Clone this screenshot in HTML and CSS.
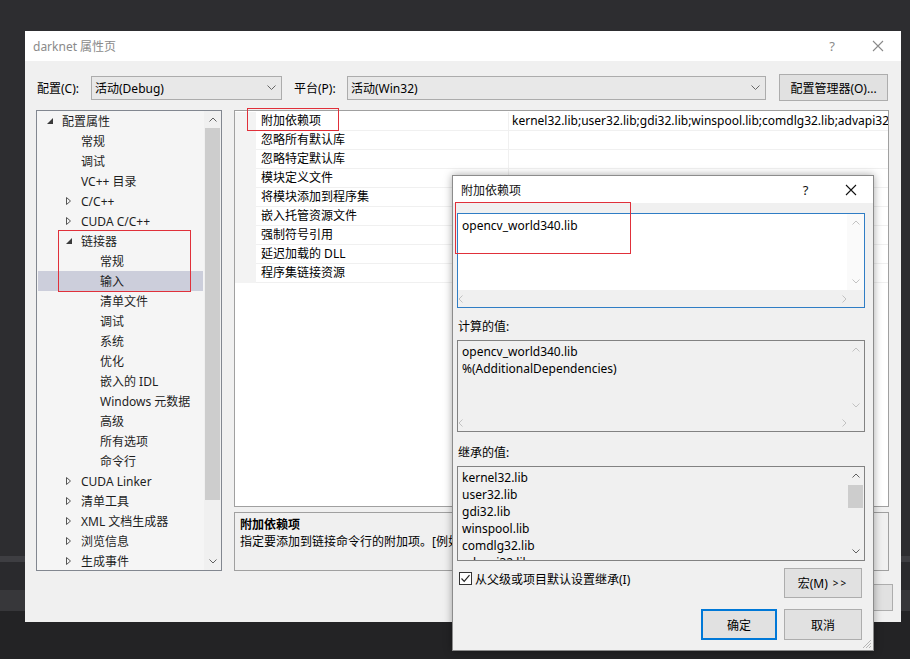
FILE: index.html
```html
<!DOCTYPE html>
<html lang="zh-CN">

<head>
    <meta charset="UTF-8">
    <title>darknet 属性页</title>
    <link rel="stylesheet" href="styles.css">
</head>

<body>
    <!-- 主窗口 -->
    <div class="win">
        <div class="titlebar">
            <span class="title">darknet 属性页</span>
            <span class="cap-btn">?</span>
            <span class="cap-btn">
                <svg width="12" height="12" viewBox="0 0 12 12"><path d="M1 1L11 11M11 1L1 11" stroke="#8a8a8a" stroke-width="1.1" fill="none"/></svg>
            </span>
        </div>

        <div class="toolbar">
            <span class="lbl lbl-cfg">配置(C):</span>
            <div class="combo combo-cfg">
                <span>活动(Debug)</span>
                <svg width="9" height="5" viewBox="0 0 9 5"><path d="M0.5 0.5L4.5 4.5L8.5 0.5" stroke="#666" fill="none"/></svg>
            </div>
            <span class="lbl lbl-plat">平台(P):</span>
            <div class="combo combo-plat">
                <span>活动(Win32)</span>
                <svg width="9" height="5" viewBox="0 0 9 5"><path d="M0.5 0.5L4.5 4.5L8.5 0.5" stroke="#666" fill="none"/></svg>
            </div>
            <div class="btn btn-mgr">配置管理器(O)...</div>
        </div>

        <div class="content">
            <div class="tree">
                <ul class="tree-list">
                    <li class="lv0"><span class="arr"><svg width="6" height="6" viewBox="0 0 6 6"><polygon points="6,0 6,6 0,6" fill="#3a3a3a"/></svg></span>配置属性</li>
                    <li class="lv1"><span class="arr"></span>常规</li>
                    <li class="lv1"><span class="arr"></span>调试</li>
                    <li class="lv1"><span class="arr"></span>VC++ 目录</li>
                    <li class="lv1"><span class="arr"><svg width="5" height="8" viewBox="0 0 5 8"><polygon points="0.5,0.5 4.5,4 0.5,7.5" fill="none" stroke="#555"/></svg></span>C/C++</li>
                    <li class="lv1"><span class="arr"><svg width="5" height="8" viewBox="0 0 5 8"><polygon points="0.5,0.5 4.5,4 0.5,7.5" fill="none" stroke="#555"/></svg></span>CUDA C/C++</li>
                    <li class="lv1"><span class="arr"><svg width="6" height="6" viewBox="0 0 6 6"><polygon points="6,0 6,6 0,6" fill="#3a3a3a"/></svg></span>链接器</li>
                    <li class="lv2"><span class="arr"></span>常规</li>
                    <li class="lv2 sel"><span class="arr"></span>输入</li>
                    <li class="lv2"><span class="arr"></span>清单文件</li>
                    <li class="lv2"><span class="arr"></span>调试</li>
                    <li class="lv2"><span class="arr"></span>系统</li>
                    <li class="lv2"><span class="arr"></span>优化</li>
                    <li class="lv2"><span class="arr"></span>嵌入的 IDL</li>
                    <li class="lv2"><span class="arr"></span>Windows 元数据</li>
                    <li class="lv2"><span class="arr"></span>高级</li>
                    <li class="lv2"><span class="arr"></span>所有选项</li>
                    <li class="lv2"><span class="arr"></span>命令行</li>
                    <li class="lv1"><span class="arr"><svg width="5" height="8" viewBox="0 0 5 8"><polygon points="0.5,0.5 4.5,4 0.5,7.5" fill="none" stroke="#555"/></svg></span>CUDA Linker</li>
                    <li class="lv1"><span class="arr"><svg width="5" height="8" viewBox="0 0 5 8"><polygon points="0.5,0.5 4.5,4 0.5,7.5" fill="none" stroke="#555"/></svg></span>清单工具</li>
                    <li class="lv1"><span class="arr"><svg width="5" height="8" viewBox="0 0 5 8"><polygon points="0.5,0.5 4.5,4 0.5,7.5" fill="none" stroke="#555"/></svg></span>XML 文档生成器</li>
                    <li class="lv1"><span class="arr"><svg width="5" height="8" viewBox="0 0 5 8"><polygon points="0.5,0.5 4.5,4 0.5,7.5" fill="none" stroke="#555"/></svg></span>浏览信息</li>
                    <li class="lv1"><span class="arr"><svg width="5" height="8" viewBox="0 0 5 8"><polygon points="0.5,0.5 4.5,4 0.5,7.5" fill="none" stroke="#555"/></svg></span>生成事件</li>
                </ul>
                <div class="vscroll">
                    <div class="sb-btn"><svg width="8" height="5" viewBox="0 0 8 5"><path d="M0.5 4.5L4 1L7.5 4.5" stroke="#606060" fill="none"/></svg></div>
                    <div class="sb-track"><div class="thumb thumb-tree"></div></div>
                    <div class="sb-btn"><svg width="8" height="5" viewBox="0 0 8 5"><path d="M0.5 0.5L4 4L7.5 0.5" stroke="#606060" fill="none"/></svg></div>
                </div>
            </div>

            <div class="main-col">
                <div class="grid">
                    <div class="pg-row"><span class="pg-gut"></span><span class="pg-name">附加依赖项</span><span class="pg-val">kernel32.lib;user32.lib;gdi32.lib;winspool.lib;comdlg32.lib;advapi32.lib;shell32.lib;ole32.lib;oleaut32.lib;uuid.lib;odbc32.lib;odbccp32.lib;%(AdditionalDependencies)</span></div>
                    <div class="pg-row"><span class="pg-gut"></span><span class="pg-name">忽略所有默认库</span><span class="pg-val"></span></div>
                    <div class="pg-row"><span class="pg-gut"></span><span class="pg-name">忽略特定默认库</span><span class="pg-val"></span></div>
                    <div class="pg-row"><span class="pg-gut"></span><span class="pg-name">模块定义文件</span><span class="pg-val"></span></div>
                    <div class="pg-row"><span class="pg-gut"></span><span class="pg-name">将模块添加到程序集</span><span class="pg-val"></span></div>
                    <div class="pg-row"><span class="pg-gut"></span><span class="pg-name">嵌入托管资源文件</span><span class="pg-val"></span></div>
                    <div class="pg-row"><span class="pg-gut"></span><span class="pg-name">强制符号引用</span><span class="pg-val"></span></div>
                    <div class="pg-row"><span class="pg-gut"></span><span class="pg-name">延迟加载的 DLL</span><span class="pg-val"></span></div>
                    <div class="pg-row"><span class="pg-gut"></span><span class="pg-name">程序集链接资源</span><span class="pg-val"></span></div>
                </div>
                <div class="desc">
                    <div class="desc-title">附加依赖项</div>
                    <div>指定要添加到链接命令行的附加项。[例如 kernel32.lib]</div>
                </div>
            </div>
        </div>

        <div class="footer">
            <div class="btn btn-foot">确定</div>
            <div class="btn btn-foot">取消</div>
            <div class="btn btn-foot">应用</div>
        </div>
    </div>

    <!-- 附加依赖项 对话框 -->
    <div class="dlg">
        <div class="dlg-title">
            <span class="title">附加依赖项</span>
            <span class="cap-btn dark">?</span>
            <span class="cap-btn">
                <svg width="12" height="12" viewBox="0 0 12 12"><path d="M1 1L11 11M11 1L1 11" stroke="#111" stroke-width="1.1" fill="none"/></svg>
            </span>
        </div>
        <div class="dlg-body">
            <div class="lb lb-edit">
                <div class="lb-text">opencv_world340.lib</div>
                <div class="lb-vs">
                    <div class="sb-btn"><svg width="8" height="5" viewBox="0 0 8 5"><path d="M0.5 4.5L4 1L7.5 4.5" stroke="#c2c2c2" fill="none"/></svg></div>
                    <div class="sb-btn"><svg width="8" height="5" viewBox="0 0 8 5"><path d="M0.5 0.5L4 4L7.5 0.5" stroke="#c2c2c2" fill="none"/></svg></div>
                </div>
                <div class="lb-hs">
                    <div class="sb-btn"><svg width="5" height="8" viewBox="0 0 5 8"><path d="M4.5 0.5L1 4L4.5 7.5" stroke="#c2c2c2" fill="none"/></svg></div>
                    <div class="sb-btn"><svg width="5" height="8" viewBox="0 0 5 8"><path d="M0.5 0.5L4 4L0.5 7.5" stroke="#c2c2c2" fill="none"/></svg></div>
                </div>
                <div class="lb-corner"></div>
            </div>

            <div class="cap">计算的值:</div>
            <div class="lb lb-calc">
                <div class="lb-text">opencv_world340.lib<br>%(AdditionalDependencies)</div>
                <div class="lb-vs">
                    <div class="sb-btn"><svg width="8" height="5" viewBox="0 0 8 5"><path d="M0.5 4.5L4 1L7.5 4.5" stroke="#c2c2c2" fill="none"/></svg></div>
                    <div class="sb-btn"><svg width="8" height="5" viewBox="0 0 8 5"><path d="M0.5 0.5L4 4L7.5 0.5" stroke="#c2c2c2" fill="none"/></svg></div>
                </div>
                <div class="lb-hs">
                    <div class="sb-btn"><svg width="5" height="8" viewBox="0 0 5 8"><path d="M4.5 0.5L1 4L4.5 7.5" stroke="#c2c2c2" fill="none"/></svg></div>
                    <div class="sb-btn"><svg width="5" height="8" viewBox="0 0 5 8"><path d="M0.5 0.5L4 4L0.5 7.5" stroke="#c2c2c2" fill="none"/></svg></div>
                </div>
                <div class="lb-corner"></div>
            </div>

            <div class="cap cap-inh">继承的值:</div>
            <div class="lb lb-inh">
                <div class="lb-text">kernel32.lib<br>user32.lib<br>gdi32.lib<br>winspool.lib<br>comdlg32.lib<br>advapi32.lib</div>
                <div class="vscroll">
                    <div class="sb-btn"><svg width="8" height="5" viewBox="0 0 8 5"><path d="M0.5 4.5L4 1L7.5 4.5" stroke="#606060" fill="none"/></svg></div>
                    <div class="sb-track"><div class="thumb thumb-inh"></div></div>
                    <div class="sb-btn"><svg width="8" height="5" viewBox="0 0 8 5"><path d="M0.5 0.5L4 4L7.5 0.5" stroke="#606060" fill="none"/></svg></div>
                </div>
            </div>

            <div class="opt-row">
                <label class="chk">
                    <span class="chk-box"><svg width="11" height="11" viewBox="0 0 11 11"><path d="M1.5 5.5L4.2 8.3L9.5 2.2" stroke="#222" stroke-width="1.2" fill="none"/></svg></span>
                    从父级或项目默认设置继承(I)
                </label>
                <div class="btn btn-macro">宏(M) <span class="gt">&gt;&gt;</span></div>
            </div>

            <div class="dlg-btns">
                <div class="btn btn-ok">确定</div>
                <div class="btn btn-cancel">取消</div>
            </div>
        </div>
        <svg class="grip" width="12" height="12" viewBox="0 0 12 12"><path d="M11 3L3 11M11 6L6 11M11 9L9 11" stroke="#b5b5b5" fill="none"/></svg>
    </div>

    <!-- 红框标注 -->
    <div class="mark mark-dep"></div>
    <div class="mark mark-tree"></div>
    <div class="mark mark-edit"></div>
</body>

</html>
```

FILE: styles.css
```css
* {
    margin: 0;
    padding: 0;
    box-sizing: border-box;
}

li {
    list-style: none;
}

body {
    width: 910px;
    height: 659px;
    overflow: hidden;
    position: relative;
    font-family: "Noto Sans", "Noto Sans CJK SC", sans-serif;
    font-size: 12px;
    color: #000;
    background: linear-gradient(to bottom, #2d2d30 0, #2d2d30 556px, #3e3e42 556px, #3e3e42 562px, #2a2a2d 562px, #2a2a2d 590px, #37373a 590px, #37373a 611px, #232325 611px);
}

/* ---------- 主窗口 ---------- */
.win {
    position: absolute;
    left: 25px;
    top: 31px;
    width: 876px;
    height: 591px;
    background: #f0f0f0;
    display: flex;
    flex-direction: column;
}

.titlebar {
    height: 30px;
    background: #fff;
    display: flex;
    align-items: center;
    padding-left: 8px;
}

.title {
    flex: 1;
    color: #8a8a8a;
}

.cap-btn {
    width: 46px;
    height: 100%;
    display: flex;
    align-items: center;
    justify-content: center;
    color: #8a8a8a;
    font-size: 13px;
}

.cap-btn.dark {
    color: #111;
}

.toolbar {
    display: flex;
    align-items: center;
    height: 27px;
    margin-top: 13px;
    padding-left: 12px;
}

.lbl-cfg {
    width: 54px;
}

.lbl-plat {
    width: 53px;
    margin-left: 12px;
}

.combo {
    height: 24px;
    border: 1px solid #acacac;
    background: #e8e8e8;
    display: flex;
    align-items: center;
    justify-content: space-between;
    padding: 0 5px 0 3px;
}

.combo-cfg {
    width: 191px;
}

.combo-plat {
    width: 419px;
}

.btn {
    background: #e1e1e1;
    border: 1px solid #adadad;
    display: flex;
    align-items: center;
    justify-content: center;
}

.btn-mgr {
    width: 109px;
    height: 27px;
    margin-left: 13px;
}

.content {
    display: flex;
    height: 461px;
    margin-top: 9px;
    padding-left: 11px;
}

/* 左侧树 */
.tree {
    width: 186px;
    border: 1px solid #828790;
    background: #f5f5f5;
    display: flex;
}

.tree-list {
    flex: 1;
    overflow: hidden;
    color: #1e1e1e;
}

.tree-list li {
    height: 20px;
    display: flex;
    align-items: center;
    white-space: nowrap;
}

.tree-list .lv0 {
    padding-left: 7px;
}

.tree-list .lv1 {
    padding-left: 26px;
}

.tree-list .lv2 {
    padding-left: 45px;
}

.tree-list .sel {
    background: #cccedb;
    margin: 0 1px;
    padding-left: 44px;
}

.arr {
    width: 18px;
    display: flex;
    align-items: center;
    padding-left: 3px;
}

.vscroll {
    width: 17px;
    background: #f0f0f0;
    display: flex;
    flex-direction: column;
}

.sb-btn {
    height: 17px;
    flex: none;
    display: flex;
    align-items: center;
    justify-content: center;
}

.sb-track {
    flex: 1;
}

.thumb {
    background: #cdcdcd;
    margin: 0 1px;
}

.thumb-tree {
    height: 372px;
}

/* 属性表格 */
.main-col {
    width: 655px;
    margin-left: 12px;
    display: flex;
    flex-direction: column;
}

.grid {
    height: 397px;
    border: 1px solid #a0a0a0;
    background: #fff;
    padding-top: 1px;
    overflow: hidden;
}

.pg-row {
    display: flex;
    height: 19px;
}

.pg-gut {
    width: 21px;
    background: #f3f3f3;
}

.pg-name {
    width: 253px;
    padding-left: 5px;
    line-height: 18px;
    border-bottom: 1px solid #f0f0f0;
    border-right: 1px solid #f0f0f0;
}

.pg-val {
    flex: 1;
    padding-left: 3px;
    line-height: 18px;
    white-space: nowrap;
    overflow: hidden;
    border-bottom: 1px solid #f0f0f0;
}

.desc {
    height: 59px;
    margin-top: 5px;
    border: 1px solid #a0a0a0;
    padding: 3px 5px;
    line-height: 17px;
    white-space: nowrap;
    overflow: hidden;
}

.desc-title {
    font-weight: bold;
}

.footer {
    display: flex;
    justify-content: flex-end;
    margin-top: 13px;
    padding-right: 8px;
    gap: 8px;
}

.btn-foot {
    width: 75px;
    height: 27px;
}

/* ---------- 对话框 ---------- */
.dlg {
    position: absolute;
    left: 452px;
    top: 175px;
    width: 422px;
    height: 476px;
    background: #f0f0f0;
    border: 1px solid #8c8c8c;
    box-shadow: 0 0 8px rgba(0, 0, 0, .35);
}

.dlg-title {
    height: 27px;
    background: #fff;
    display: flex;
    align-items: center;
    padding-left: 8px;
}

.dlg-title .title {
    color: #111;
}

.dlg-title .cap-btn {
    width: 45px;
}

.dlg-body {
    padding: 10px 8px 0 4px;
}

.lb {
    display: grid;
    grid-template-columns: 1fr 17px;
    grid-template-rows: 1fr 17px;
    border: 1px solid #828282;
    line-height: 17px;
}

.lb-text {
    padding: 2px 4px;
    overflow: hidden;
    white-space: nowrap;
}

.lb-vs {
    display: flex;
    flex-direction: column;
    justify-content: space-between;
}

.lb-hs {
    display: flex;
    justify-content: space-between;
    background: #f0f0f0;
}

.lb-corner {
    background: #f0f0f0;
}

.lb-edit {
    height: 95px;
    border-color: #2f7dc5;
    background: #fff;
}

.lb-edit .lb-text {
    padding-top: 3px;
}

.lb-edit .lb-vs {
    background: #fafafa;
}

.lb-calc {
    height: 92px;
    background: #f0f0f0;
}

.lb-inh {
    height: 95px;
    grid-template-rows: 1fr;
    background: #f0f0f0;
}

.thumb-inh {
    height: 23px;
    margin-top: 1px;
}

.cap {
    margin: 10px 0 5px 1px;
    line-height: 17px;
}

.cap-inh {
    margin-top: 12px;
}

.opt-row {
    display: flex;
    justify-content: space-between;
    margin-top: 7px;
}

.chk {
    display: flex;
    align-items: center;
    margin: 4px 0 0 2px;
    height: 13px;
}

.chk-box {
    width: 13px;
    height: 13px;
    border: 1px solid #333;
    background: #fff;
    display: flex;
    align-items: center;
    justify-content: center;
    margin-right: 3px;
}

.btn-macro {
    width: 78px;
    height: 30px;
    margin-right: 3px;
}

.gt {
    font-size: 10px;
    letter-spacing: 2px;
    margin-left: 5px;
}

.dlg-btns {
    display: flex;
    justify-content: flex-end;
    gap: 7px;
    margin: 11px 3px 0 0;
}

.btn-ok {
    width: 76px;
    height: 31px;
    border: 2px solid #0078d7;
}

.btn-cancel {
    width: 78px;
    height: 31px;
}

.grip {
    position: absolute;
    right: 1px;
    bottom: 1px;
}

/* ---------- 红框 ---------- */
.mark {
    position: absolute;
    border: 1px solid #e0303a;
}

.mark-dep {
    left: 247px;
    top: 108px;
    width: 92px;
    height: 23px;
}

.mark-tree {
    left: 58px;
    top: 230px;
    width: 133px;
    height: 62px;
}

.mark-edit {
    left: 455px;
    top: 202px;
    width: 176px;
    height: 52px;
}
```
